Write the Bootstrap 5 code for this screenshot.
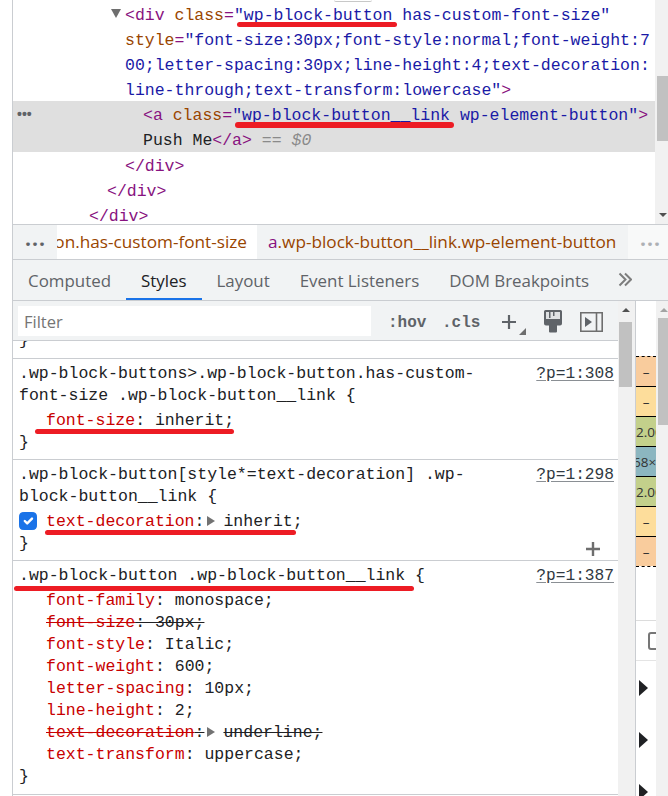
<!DOCTYPE html>
<html lang="en">
<head>
  <meta charset="UTF-8">
  <title>DevTools Styles</title>
  <meta name="viewport" content="width=device-width, initial-scale=1">
  <link href="https://cdn.jsdelivr.net/npm/bootstrap@5.3.3/dist/css/bootstrap.min.css" rel="stylesheet">
  <style>
    html, body { height: 796px; overflow: hidden; }
    body { background: #fff; color: #202124; font-family: "Liberation Mono", monospace; font-size: 16.5px; }
    .shell { height: 796px; margin-left: 12px; border-left: 1px solid #cacdd1; position: relative; }
    .top-notch { position: absolute; left: 321px; top: 0; width: 38px; height: 2px; border-bottom: 1px solid #c8c8c8; border-radius: 0 0 4px 4px; }

    /* elements tree */
    .dom-pane { height: 225px; border-bottom: 1px solid #cacdd1; }
    .dom-tree { padding-top: 1px; }
    .dom-line { height: 25px; line-height: 29px; white-space: nowrap; position: relative; }
    .dom-sel { background: #dfdfdf; height: 51px; position: relative; }
    .ind-1 { padding-left: 112px; }
    .ind-2 { padding-left: 130px; }
    .ind-3 { padding-left: 94px; }
    .ind-4 { padding-left: 76px; }
    .tw { position: absolute; left: 98px; top: 8px; width: 0; height: 0; border-left: 5px solid transparent; border-right: 5px solid transparent; border-top: 9px solid #6e6e6e; }
    .dots { position: absolute; left: 4px; top: 3px; color: #5f6368; font-weight: 700; font-size: 14px; font-family: "Liberation Sans", sans-serif; line-height: 20px; }
    .tag { color: #881280; }
    .atn { color: #994500; }
    .atv { color: #1a1aa6; }
    .eq0 { color: #8a8a8a; }

    /* scrollbars */
    .sbar { width: 13px; background: #f1f1f1; position: relative; flex: none; }
    .sbar-thumb { position: absolute; left: 2px; right: 0; background: #c1c1c1; }
    .thumb-dom { top: 76px; height: 65px; }
    .thumb-styles { top: 21px; height: 65px; left: 1px; right: 3px; }
    .thumb-side { top: 17px; height: 107px; right: 1px; }
    .arr-up, .arr-down { position: absolute; width: 0; height: 0; border-left: 4px solid transparent; border-right: 4px solid transparent; }
    .arr-up { border-bottom: 4px solid #505050; }
    .arr-down { border-top: 4px solid #505050; }
    .arr-dom { left: 4px; top: 213px; }
    .arr-styles { left: 4px; top: 7px; }
    .arr-side { left: 4px; top: 7px; border-bottom-color: #a3a3a3; }

    /* breadcrumb and tabs */
    .crumbs { height: 35px; border-bottom: 1px solid #cacdd1; font-family: "Open Sans", sans-serif; font-size: 17.2px; color: #994500; background: #f1f3f4; }
    .crumb-more { width: 44px; color: #5f6368; font-weight: 700; font-size: 21px; line-height: 26px; padding-left: 12px; letter-spacing: 1px; flex: none; }
    .crumb-cut { width: 200px; background: #fff; overflow: hidden; white-space: nowrap; justify-content: flex-end; padding-right: 10px; flex: none; }
    .crumb-on { padding-left: 11px; white-space: nowrap; flex: none; width: 371px; }
    .crumb-end { background: #f8f9f9; color: #adb0b4; flex: 1; font-weight: 700; font-size: 21px; line-height: 26px; padding-left: 12px; letter-spacing: 1px; }
    .tabbar { height: 41px; background: #f1f3f4; border-bottom: 1px solid #cacdd1; font-family: "Open Sans", sans-serif; font-size: 16.9px; color: #5f6368; }
    .tabitem { padding: 0 15px; height: 40px; line-height: 42px; white-space: nowrap; }
    .tabitem-on { color: #202124; border-bottom: 2px solid #1a73e8; }
    .tab-more { padding: 12px 0 0 14px; }

    /* styles pane */
    .lower { height: 495px; }
    .styles-col { width: 605px; flex: none; }
    .toolbar { height: 40px; background: #f1f3f4; border-bottom: 1px solid #cacdd1; padding: 5px 0 0 5px; }
    .filter-box { width: 353px; height: 30px; border: 0; border-radius: 0; padding: 0 6px; font-family: "Open Sans", sans-serif; font-size: 16.5px; }
    .filter-box::placeholder { color: #757575; }
    .tool-txt { font-weight: 700; color: #5f6368; font-size: 16px; line-height: 34px; flex: none; }
    .hov { margin-left: 17px; width: 54px; }
    .cls { width: 58px; }
    .tool-ico { flex: none; }
    .rules { line-height: 22px; }
    .rule { border-bottom: 1px solid #cacdd1; padding: 4px 0 0 6px; white-space: nowrap; height: 101px; position: relative; }
    .rule-head { height: 18px; overflow: hidden; padding-left: 6px; line-height: 0; border-bottom: 1px solid #cacdd1; }
    .rule-last { height: 234px; }
    .src { position: absolute; right: 4px; top: 4px; color: #303942; text-decoration: underline; text-decoration-color: #8a8f94; text-underline-offset: 2px; font-size: 16.2px; }
    .decl { padding-left: 27px; }
    .decl-gap { padding-top: 3px; }
    .pn { color: #c80000; }
    .strike { text-decoration: line-through; }
    .tri { display: inline-block; width: 0; height: 0; border-top: 5px solid transparent; border-bottom: 5px solid transparent; border-left: 8px solid #727272; margin: 0 8px 0 3px; }
    .chk { position: absolute; left: 0; top: 4px; width: 18px; height: 18px; margin: 0; border-radius: 3px; }
    .chk:checked { background-color: #1a73e8; border-color: #1a73e8; }
    .rule-plus { position: absolute; right: 17px; bottom: 3px; }
    .decl-row { position: relative; }

    /* red marker lines drawn on the screenshot */
    .ink { position: relative; }
    .ink::after { content: ""; position: absolute; height: 5px; background: #ed1c24; border-radius: 3px; }
    .ink-dom1::after { left: 3px; right: 5px; bottom: -2px; }
    .ink-dom2::after { left: 3px; right: 6px; bottom: -3px; height: 6px; }
    .ink-size::after { left: -11px; right: 0; bottom: -4px; }
    .ink-deco::after { left: -1px; right: 7px; bottom: -4px; }
    .ink-sel::after { left: -5px; right: -9px; bottom: -6px; }

    /* computed box model strip */
    .box-col { width: 21px; border-left: 1px solid #cacdd1; flex: none; overflow: hidden; background: #fff; }
    .box-top { height: 55px; }
    .bm { height: 30px; font-family: "Open Sans", sans-serif; font-size: 13.5px; line-height: 30px; text-align: center; border-top: 1px solid #000; white-space: nowrap; overflow: hidden; color: #333; }
    .bm-num { text-align: left; }
    .bm-cut { text-align: left; text-indent: -3px; }
    .bm-dash { border-top: 1px dashed #000; }
    .bm-o { background: #f9cc9d; }
    .bm-y { background: #fddd9b; }
    .bm-g { background: #c3d08b; }
    .bm-b { background: #8cb6c0; }
    .bm-end { height: 1px; border-top: 1px dashed #000; }
    .box-gap { height: 54px; border-bottom: 1px solid #dcdcdc; }
    .box-chk { height: 40px; border-bottom: 1px solid #e4e4e4; padding: 11px 0 0 12px; }
    .chk-off { width: 18px; height: 18px; border: 2px solid #767676; border-radius: 3px; }
    .play { width: 0; height: 0; border-top: 8px solid transparent; border-bottom: 8px solid transparent; border-left: 9px solid #202124; margin: 0 0 36px 3px; }
    .play-first { margin-top: 19px; }
    .sbar-gap { width: 17px; }
  </style>
</head>
<body>
  <div class="shell d-flex flex-column">
    <div class="dom-pane d-flex">
      <div class="dom-tree flex-grow-1 overflow-hidden">
        <div class="dom-line ind-1"><span class="tw"></span><span class="tag">&lt;div</span> <span class="atn">class</span><span class="tag">=</span><span class="atv"><span class="ink ink-dom1">"wp-block-button </span>has-custom-font-size"</span></div>
        <div class="dom-line ind-1"><span class="atn">style</span><span class="tag">=</span><span class="atv">"font-size:30px;font-style:normal;font-weight:7</span></div>
        <div class="dom-line ind-1"><span class="atv">00;letter-spacing:30px;line-height:4;text-decoration:</span></div>
        <div class="dom-line ind-1"><span class="atv">line-through;text-transform:lowercase"</span><span class="tag">&gt;</span></div>
        <div class="dom-sel">
          <span class="dots">•••</span>
          <div class="dom-line ind-2"><span class="tag">&lt;a</span> <span class="atn">class</span><span class="tag">=</span><span class="atv"><span class="ink ink-dom2">"wp-block-button__link </span>wp-element-button"</span><span class="tag">&gt;</span></div>
          <div class="dom-line ind-2">Push Me<span class="tag">&lt;/a&gt;</span> <span class="eq0">== <i>$0</i></span></div>
        </div>
        <div class="dom-line ind-1"><span class="tag">&lt;/div&gt;</span></div>
        <div class="dom-line ind-3"><span class="tag">&lt;/div&gt;</span></div>
        <div class="dom-line ind-4"><span class="tag">&lt;/div&gt;</span></div>
      </div>
      <div class="sbar">
        <div class="sbar-thumb thumb-dom"></div>
        <div class="arr-down arr-dom"></div>
      </div>
    </div>
    <div class="top-notch"></div>

    <div class="crumbs d-flex">
      <div class="crumb-more">...</div>
      <div class="crumb-cut d-flex align-items-center">on.has-custom-font-size</div>
      <div class="crumb-on d-flex align-items-center"><span class="tag">a</span>.wp-block-button__link.wp-element-button</div>
      <div class="crumb-end">...</div>
    </div>

    <div class="tabbar d-flex">
      <div class="tabitem">Computed</div>
      <div class="tabitem tabitem-on">Styles</div>
      <div class="tabitem">Layout</div>
      <div class="tabitem">Event Listeners</div>
      <div class="tabitem">DOM Breakpoints</div>
      <div class="tab-more d-flex align-items-start"><svg width="14" height="15" viewBox="0 0 14 15"><path d="M1.500 1.500l6 6-6 6M7 1.500l6 6-6 6" stroke="#7d7d7d" stroke-width="2" fill="none"/></svg></div>
    </div>

    <div class="lower d-flex">
      <div class="styles-col d-flex flex-column">
        <div class="toolbar d-flex">
          <input class="form-control filter-box" type="text" placeholder="Filter">
          <div class="tool-txt hov">:hov</div>
          <div class="tool-txt cls">.cls</div>
          <svg class="tool-ico" width="27" height="30" viewBox="0 0 27 30"><path d="M9 9v14M2 16h14" stroke="#5f6368" stroke-width="2.200" fill="none"/><path d="M26 22v7h-7z" fill="#6e6e6e"/></svg>
          <svg class="tool-ico ms-3" width="20" height="30" viewBox="0 0 20 30"><g transform="translate(0 4)"><path d="M2.500 0h15a1.500 1.500 0 0 1 1.500 1.500v12a2 2 0 0 1-2 2h-3v6a1 1 0 0 1-1 1H7a1 1 0 0 1-1-1v-6H3a2 2 0 0 1-2-2v-12A1.500 1.500 0 0 1 2.500 0z" fill="#5f6368"/><path d="M3 2h3v6h1.500V2H10v4h1.500V2H17v7H3z" fill="#dfe1e3"/></g></svg>
          <svg class="tool-ico ms-3" width="24" height="30" viewBox="0 0 24 30"><path d="M1.800 6.800h21.400v18.400H1.800zM17.500 6.800v18.400" stroke="#6e6e6e" stroke-width="1.600" fill="none"/><path d="M6 11l7 5-7 5z" fill="#5f6368"/></svg>
        </div>
        <div class="rules">
          <div class="rule-head"><span>}</span></div>
          <div class="rule">
            <span class="src">?p=1:308</span>
            <div>.wp-block-buttons&gt;.wp-block-button.has-custom-</div>
            <div>font-size .wp-block-button__link {</div>
            <div class="decl decl-gap"><span class="ink ink-size"><span class="pn">font-size</span>: inherit;</span></div>
            <div>}</div>
          </div>
          <div class="rule">
            <span class="src">?p=1:298</span>
            <div>.wp-block-button[style*=text-decoration] .wp-</div>
            <div>block-button__link {</div>
            <div class="decl decl-gap decl-row"><input class="form-check-input chk" type="checkbox" checked><span class="ink ink-deco"><span class="pn">text-decoration</span>:<span class="tri"></span>inherit;</span></div>
            <div>}</div>
            <svg class="rule-plus" width="16" height="16" viewBox="0 0 16 16"><path d="M8 1v14M1 8h14" stroke="#6e6e6e" stroke-width="2.400"/></svg>
          </div>
          <div class="rule rule-last">
            <span class="src">?p=1:387</span>
            <div><span class="ink ink-sel">.wp-block-button .wp-block-button__link</span> {</div>
            <div class="decl decl-gap"><span class="pn">font-family</span>: monospace;</div>
            <div class="decl"><span class="pn strike">font-size</span><span class="strike">: 30px;</span></div>
            <div class="decl"><span class="pn">font-style</span>: Italic;</div>
            <div class="decl"><span class="pn">font-weight</span>: 600;</div>
            <div class="decl"><span class="pn">letter-spacing</span>: 10px;</div>
            <div class="decl"><span class="pn">line-height</span>: 2;</div>
            <div class="decl"><span class="pn strike">text-decoration</span><span class="strike">:<span class="tri"></span>underline;</span></div>
            <div class="decl"><span class="pn">text-transform</span>: uppercase;</div>
            <div>}</div>
          </div>
        </div>
      </div>
      <div class="sbar sbar-gap">
        <div class="sbar-thumb thumb-styles"></div>
        <div class="arr-up arr-styles"></div>
      </div>
      <div class="box-col">
        <div class="box-top"></div>
        <div class="bm bm-dash bm-o">–</div>
        <div class="bm bm-y">–</div>
        <div class="bm bm-g bm-num">2.000</div>
        <div class="bm bm-b bm-cut">68×</div>
        <div class="bm bm-g bm-num">2.000</div>
        <div class="bm bm-y">–</div>
        <div class="bm bm-o">–</div>
        <div class="bm-end"></div>
        <div class="box-gap"></div>
        <div class="box-chk"><div class="chk-off"></div></div>
        <div class="play play-first"></div>
        <div class="play"></div>
        <div class="play"></div>
      </div>
      <div class="sbar">
        <div class="sbar-thumb thumb-side"></div>
        <div class="arr-up arr-side"></div>
      </div>
    </div>
  </div>
  <script src="https://cdn.jsdelivr.net/npm/bootstrap@5.3.3/dist/js/bootstrap.bundle.min.js"></script>
</body>
</html>
